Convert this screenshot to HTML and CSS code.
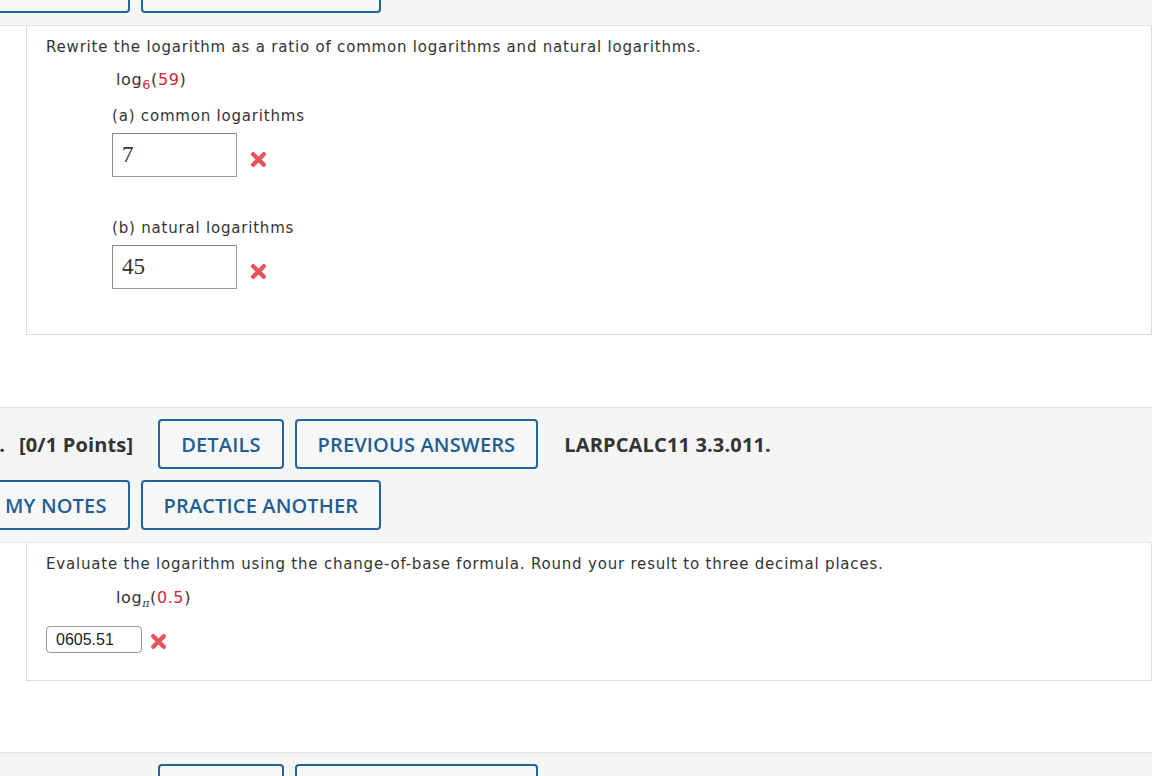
FILE: index.html
```html
<!DOCTYPE html>
<html>
<head>
<meta charset="utf-8">
<link rel="stylesheet" href="styles.css">
</head>
<body>
<div class="page">
  <div class="qhead">
    <div class="row">
      <span class="num">6.</span><span class="pts">[0/1 Points]</span>
      <span class="btn first">DETAILS</span><span class="btn">PREVIOUS ANSWERS</span>
      <span class="ref">LARPCALC11 3.3.010.</span>
    </div>
    <div class="row">
      <span class="btn">MY NOTES</span><span class="btn">PRACTICE ANOTHER</span>
    </div>
  </div>
  <div class="qbody q1">
    <p class="text">Rewrite the logarithm as a ratio of common logarithms and natural logarithms.</p>
    <p class="math">log<sub class="red">6</sub>(<span class="red">59</span>)</p>
    <p class="label">(a) common logarithms</p>
    <div class="ansrow">
      <span class="mbox">7</span>
      <svg class="xmark" viewBox="0 0 17 17" width="17" height="17"><path d="M3.2 3.2 L13.8 13.8 M13.8 3.2 L3.2 13.8" /></svg>
    </div>
    <p class="label lb">(b) natural logarithms</p>
    <div class="ansrow">
      <span class="mbox">45</span>
      <svg class="xmark" viewBox="0 0 17 17" width="17" height="17"><path d="M3.2 3.2 L13.8 13.8 M13.8 3.2 L3.2 13.8" /></svg>
    </div>
  </div>

  <div class="qhead">
    <div class="row">
      <span class="num">7.</span><span class="pts">[0/1 Points]</span>
      <span class="btn first">DETAILS</span><span class="btn">PREVIOUS ANSWERS</span>
      <span class="ref">LARPCALC11 3.3.011.</span>
    </div>
    <div class="row">
      <span class="btn">MY NOTES</span><span class="btn">PRACTICE ANOTHER</span>
    </div>
  </div>
  <div class="qbody q2">
    <p class="text">Evaluate the logarithm using the change-of-base formula. Round your result to three decimal places.</p>
    <p class="math m2">log<sub class="pi">π</sub>(<span class="red">0.5</span>)</p>
    <div class="ansrow small">
      <span class="tbox">0605.51</span>
      <svg class="xmark" viewBox="0 0 17 17" width="17" height="17"><path d="M3.2 3.2 L13.8 13.8 M13.8 3.2 L3.2 13.8" /></svg>
    </div>
  </div>

  <div class="qhead">
    <div class="row">
      <span class="num">8.</span><span class="pts">[0/1 Points]</span>
      <span class="btn first">DETAILS</span><span class="btn">PREVIOUS ANSWERS</span>
      <span class="ref">LARPCALC11 3.3.012.</span>
    </div>
    <div class="row">
      <span class="btn">MY NOTES</span><span class="btn">PRACTICE ANOTHER</span>
    </div>
  </div>
</div>
</body>
</html>
```

FILE: styles.css
```css
html, body {
  margin: 0;
  padding: 0;
  background: #ffffff;
  overflow: hidden;
}
.page {
  width: 1152px;
  margin-top: -110px;
}
.qhead {
  background: #f5f5f5;
  border-top: 1px solid #e4e4e4;
  border-bottom: 1px solid #e4e4e4;
  padding: 11px 0 12px 0;
  display: flex;
  flex-direction: column;
  gap: 11px;
  font-family: "Open Sans", "Liberation Sans", sans-serif;
  letter-spacing: 0.15px;
}
.row {
  display: flex;
  align-items: center;
  margin-left: -18px;
  height: 50px;
}
.num {
  width: 23px;
  text-align: right;
  margin-right: 14px;
  font-weight: 700;
  font-size: 20px;
  color: #333333;
}
.pts {
  font-weight: 700;
  font-size: 20px;
  color: #333333;
  margin-right: 25px;
}
.btn {
  box-sizing: border-box;
  height: 50px;
  display: flex;
  align-items: center;
  padding: 0 21px;
  border: 2px solid #23639a;
  border-radius: 4px;
  color: #1f5e92;
  font-size: 20px;
  font-weight: 600;
  margin-right: 11px;
  background: #f7f7f7;
}
.ref {
  margin-left: 15px;
  font-weight: 700;
  font-size: 20px;
  color: #333333;
}
.qbody {
  margin-left: 26px;
  border: 1px solid #dddddd;
  border-top: none;
  padding: 11px 19px 0 19px;
  font-family: "DejaVu Sans", Verdana, sans-serif;
  font-size: 15px;
  letter-spacing: 0.8px;
  color: #333333;
}
.q1 {
  padding-bottom: 45px;
  margin-bottom: 72px;
}
.q2 {
  padding-bottom: 27px;
  margin-bottom: 71px;
}
.qbody p {
  margin: 0;
  line-height: 20px;
}
.math {
  margin-top: 13px !important;
  margin-left: 70px !important;
  font-size: 16px;
  letter-spacing: 0.6px;
}
.m2 {
  margin-top: 14px !important;
}
.math sub {
  font-size: 13px;
  line-height: 0;
  vertical-align: -4px;
}
.math sub.pi {
  font-family: "DejaVu Serif", "Liberation Serif", serif;
  font-style: italic;
  font-size: 11px;
  color: #333333;
}
.red {
  color: #d9242c;
}
.label {
  margin-top: 16px !important;
  margin-left: 66px !important;
}
.label.lb {
  margin-top: 41px !important;
}
.ansrow {
  display: flex;
  align-items: flex-end;
  margin-left: 66px;
  margin-top: 7px;
}
.mbox {
  box-sizing: border-box;
  width: 125px;
  height: 44px;
  border: 1px solid #9a9a9a;
  border-top-color: #8a8a8a;
  border-left-color: #8a8a8a;
  padding: 8px 0 0 9px;
  font-family: "Liberation Serif", "DejaVu Serif", serif;
  font-size: 23px;
  line-height: 26px;
  letter-spacing: 0;
  color: #333333;
  background: #ffffff;
}
.xmark {
  margin-left: 13px;
  margin-bottom: 9px;
}
.xmark path {
  stroke: #e5535c;
  stroke-width: 4.4;
  stroke-linecap: round;
  fill: none;
}
.ansrow.small {
  margin-left: 0;
  margin-top: 18px;
  align-items: center;
}
.tbox {
  box-sizing: border-box;
  width: 96px;
  height: 27px;
  border: 1px solid #999999;
  border-radius: 4px;
  padding: 0 0 0 9px;
  font-family: "Liberation Sans", Arial, sans-serif;
  font-size: 16px;
  letter-spacing: 0;
  line-height: 25px;
  color: #222222;
}
.small .xmark {
  margin-left: 8px;
  margin-bottom: 0;
  margin-top: 4px;
}
```
